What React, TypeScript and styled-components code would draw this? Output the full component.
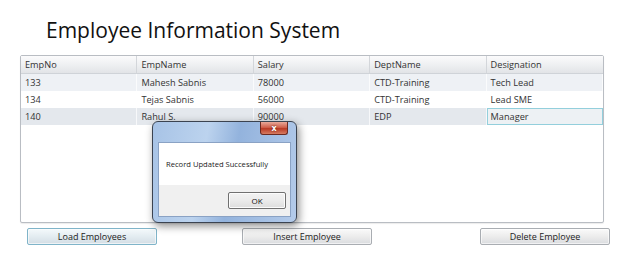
import { createGlobalStyle } from "styled-components";
import styled from "styled-components";

const GlobalStyle = createGlobalStyle`
  body {
    margin: 0;
    background: #ffffff;
    font-family: "Open Sans", "Liberation Sans", sans-serif;
  }
`;

const columns = ["EmpNo", "EmpName", "Salary", "DeptName", "Designation"];

const rows = [
  ["133", "Mahesh Sabnis", "78000", "CTD-Training", "Tech Lead"],
  ["134", "Tejas Sabnis", "56000", "CTD-Training", "Lead SME"],
  ["140", "Rahul S.", "90000", "EDP", "Manager"],
];

const rowColors = ["#eef1f5", "#ffffff", "#e4e8ed"];

const Page = styled.div`
  position: relative;
  width: 627px;
  height: 280px;
  padding: 15px 0 0 0;
  box-sizing: border-box;
`;

const Title = styled.h1`
  margin: 0 0 0 46px;
  font-family: "Open Sans", sans-serif;
  font-weight: 400;
  font-size: 21px;
  line-height: 30px;
  color: #111;
`;

const Grid = styled.div`
  margin: 10px 0 0 20px;
  width: 584px;
  height: 168px;
  box-sizing: border-box;
  border: 1px solid #b9bdc3;
  border-radius: 2px;
  box-shadow: 0 1px 1px rgba(0, 0, 0, 0.08);
  background: #fff;
  overflow: hidden;
`;

const Row = styled.div<{ $bg: string; $height: number }>`
  display: grid;
  grid-template-columns: repeat(5, 1fr);
  height: ${(p) => p.$height}px;
  background: ${(p) => p.$bg};
`;

const HeaderCell = styled.div`
  display: flex;
  align-items: center;
  padding-left: 4px;
  font-size: 9.2px;
  color: #333;
  background: linear-gradient(#fbfbfc, #eceef0 60%, #e2e4e7);
  border-right: 1px solid #d3d6da;
  border-bottom: 1px solid #cfd3d8;
  &:last-child {
    border-right: none;
  }
`;

const Cell = styled.div<{ $selected?: boolean }>`
  display: flex;
  align-items: center;
  padding-left: 4px;
  font-size: 9.2px;
  color: #333;
  box-sizing: border-box;
  border-right: 1px solid rgba(255, 255, 255, 0.7);
  ${(p) =>
    p.$selected &&
    `
    border: 1px solid #93cfdc;
    padding-left: 3px;
    background: #edf1f4;
  `}
`;

const ButtonBar = styled.div`
  display: flex;
  margin-top: 5px;
  height: 17px;
`;

const Button = styled.button<{ $ml: number; $focused?: boolean }>`
  margin-left: ${(p) => p.$ml}px;
  width: 130px;
  height: 17px;
  padding: 0;
  font-family: "Open Sans", sans-serif;
  font-size: 9px;
  color: #222;
  border: 1px solid ${(p) => (p.$focused ? "#7fb4c9" : "#a9adb2")};
  border-radius: 2px;
  background: ${(p) =>
    p.$focused
      ? "linear-gradient(#f4f9fb, #e3ecf1 50%, #d3dde4)"
      : "linear-gradient(#fafafa, #ececec 50%, #dadcdf)"};
  box-shadow: inset 0 0 0 1px rgba(255, 255, 255, 0.6);
`;

const Dialog = styled.div`
  position: absolute;
  left: 152px;
  top: 121px;
  width: 145px;
  height: 102px;
  box-sizing: border-box;
  padding: 0 5px 5px 5px;
  border: 1px solid #3b4350;
  border-radius: 6px;
  background: linear-gradient(100deg, #a7c3e6 0%, #bcd3ee 35%, #93b3dd 55%, #b4cbea 100%);
  box-shadow: 2px 3px 8px rgba(0, 0, 0, 0.45);
  display: flex;
  flex-direction: column;
`;

const TitleBar = styled.div`
  height: 20px;
  display: flex;
  justify-content: flex-end;
  align-items: flex-start;
`;

const CloseButton = styled.div`
  width: 26px;
  height: 12px;
  margin-right: 3px;
  border: 1px solid #6b2a22;
  border-top: none;
  border-radius: 0 0 3px 3px;
  background: linear-gradient(#e9a99a, #d0604b 45%, #b93a25 55%, #d77c62);
  color: #fff;
  font-family: "DejaVu Sans", sans-serif;
  font-size: 8px;
  font-weight: 700;
  display: flex;
  align-items: center;
  justify-content: center;
  text-shadow: 0 0 2px #5a1a10;
`;

const Body = styled.div`
  flex: 1;
  display: flex;
  flex-direction: column;
  border: 1px solid #8aa2c4;
  background: #fff;
`;

const Message = styled.div`
  height: 42px;
  display: flex;
  align-items: center;
  padding-left: 7px;
  font-family: "Open Sans", sans-serif;
  font-size: 7.6px;
  color: #222;
`;

const Footer = styled.div`
  flex: 1;
  display: flex;
  justify-content: flex-end;
  align-items: flex-start;
  padding: 7px 4px 0 0;
  background: #f0f0f0;
`;

const OkButton = styled.button`
  width: 58px;
  height: 17px;
  padding: 0;
  font-family: "Open Sans", sans-serif;
  font-size: 8px;
  color: #111;
  border: 1px solid #707070;
  border-radius: 2px;
  background: linear-gradient(#f2f2f2, #ebebeb 50%, #dddddd);
  box-shadow: inset 0 0 0 1px #fcfcfc;
`;

export default function App() {
  return (
    <>
      <GlobalStyle />
      <Page>
        <Title>Employee Information System</Title>
        <Grid>
          <Row $bg="#fff" $height={18}>
            {columns.map((c) => (
              <HeaderCell key={c}>{c}</HeaderCell>
            ))}
          </Row>
          {rows.map((r, i) => (
            <Row key={r[0]} $bg={rowColors[i]} $height={17}>
              {r.map((v, j) => (
                <Cell key={j} $selected={i === 2 && j === 4}>
                  {v}
                </Cell>
              ))}
            </Row>
          ))}
        </Grid>
        <ButtonBar>
          <Button $ml={27} $focused>
            Load Employees
          </Button>
          <Button $ml={85}>Insert Employee</Button>
          <Button $ml={108}>Delete Employee</Button>
        </ButtonBar>
        <Dialog>
          <TitleBar>
            <CloseButton>x</CloseButton>
          </TitleBar>
          <Body>
            <Message>Record Updated Successfully</Message>
            <Footer>
              <OkButton>OK</OkButton>
            </Footer>
          </Body>
        </Dialog>
      </Page>
    </>
  );
}
